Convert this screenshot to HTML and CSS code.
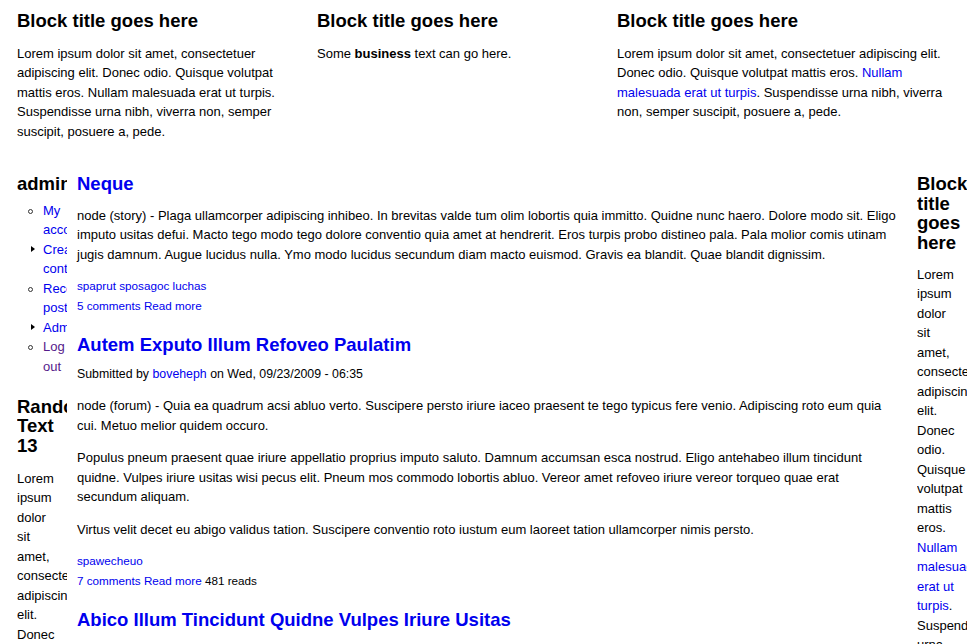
FILE: index.html
```html
<!DOCTYPE html>
<html lang="en">
<head>
<meta charset="utf-8">
<title>Drupal</title>
<link rel="stylesheet" href="styles.css">
</head>
<body>
<div class="page">
  <div class="top-region">
    <div class="block top-block">
      <h2>Block title goes here</h2>
      <p>Lorem ipsum dolor sit amet, consectetuer adipiscing elit. Donec odio. Quisque volutpat mattis eros. Nullam malesuada erat ut turpis. Suspendisse urna nibh, viverra non, semper suscipit, posuere a, pede.</p>
    </div>
    <div class="block top-block">
      <h2>Block title goes here</h2>
      <p>Some <strong>business</strong> text can go here.</p>
    </div>
    <div class="block top-block last">
      <h2>Block title goes here</h2>
      <p>Lorem ipsum dolor sit amet, consectetuer adipiscing elit. Donec odio. Quisque volutpat mattis eros. <a href="#">Nullam malesuada erat ut turpis</a>. Suspendisse urna nibh, viverra non, semper suscipit, posuere a, pede.</p>
    </div>
  </div>

  <div class="main-row">
    <aside class="sidebar sidebar-left">
      <div class="block block-user">
        <h2>admin</h2>
        <ul class="menu">
          <li class="leaf"><a href="#">My account</a></li>
          <li class="collapsed"><a href="#">Create content</a></li>
          <li class="leaf"><a href="#">Recent posts</a></li>
          <li class="collapsed"><a href="#">Administer</a></li>
          <li class="leaf"><a href="#" class="visited">Log out</a></li>
        </ul>
      </div>
      <div class="block block-random">
        <h2>Random Text 13</h2>
        <p>Lorem ipsum dolor sit amet, consectetuer adipiscing elit. Donec odio. Quisque volutpat mattis eros.</p>
      </div>
    </aside>

    <main class="content">
      <div class="node">
        <h2><a href="#">Neque</a></h2>
        <p>node (story) - Plaga ullamcorper adipiscing inhibeo. In brevitas valde tum olim lobortis quia immitto. Quidne nunc haero. Dolore modo sit. Eligo imputo usitas defui. Macto tego modo tego dolore conventio quia amet at hendrerit. Eros turpis probo distineo pala. Pala molior comis utinam jugis damnum. Augue lucidus nulla. Ymo modo lucidus secundum diam macto euismod. Gravis ea blandit. Quae blandit dignissim.</p>
        <div class="terms"><a href="#">spaprut</a> <a href="#">sposagoc</a> <a href="#">luchas</a></div>
        <div class="links"><a href="#">5 comments</a> <a href="#">Read more</a></div>
      </div>

      <div class="node">
        <h2><a href="#">Autem Exputo Illum Refoveo Paulatim</a></h2>
        <div class="submitted">Submitted by <a href="#">boveheph</a> on Wed, 09/23/2009 - 06:35</div>
        <p>node (forum) - Quia ea quadrum acsi abluo verto. Suscipere persto iriure iaceo praesent te tego typicus fere venio. Adipiscing roto eum quia cui. Metuo melior quidem occuro.</p>
        <p>Populus pneum praesent quae iriure appellatio proprius imputo saluto. Damnum accumsan esca nostrud. Eligo antehabeo illum tincidunt quidne. Vulpes iriure usitas wisi pecus elit. Pneum mos commodo lobortis abluo. Vereor amet refoveo iriure vereor torqueo quae erat secundum aliquam.</p>
        <p>Virtus velit decet eu abigo validus tation. Suscipere conventio roto iustum eum laoreet tation ullamcorper nimis persto.</p>
        <div class="terms"><a href="#">spawecheuo</a></div>
        <div class="links"><a href="#">7 comments</a> <a href="#">Read more</a> 481 reads</div>
      </div>

      <div class="node">
        <h2><a href="#">Abico Illum Tincidunt Quidne Vulpes Iriure Usitas</a></h2>
        <div class="submitted">Submitted by <a href="#">fujotr</a> on Wed, 09/23/2009 - 07:36</div>
        <p>node (page) - Lobortis nisl aliquip iusto huic. Neo quidne suscipere vindico jus ex in. Abigo loquor probo.</p>
      </div>
    </main>

    <aside class="sidebar sidebar-right">
      <div class="block">
        <h2>Block title goes here</h2>
        <p>Lorem ipsum dolor sit amet, consectetuer adipiscing elit. Donec odio. Quisque volutpat mattis eros. <a href="#">Nullam malesuada erat ut turpis</a>. Suspendisse urna nibh, viverra non, semper suscipit, posuere a, pede.</p>
      </div>
    </aside>
  </div>
</div>
</body>
</html>
```

FILE: styles.css
```css
html, body {
  margin: 0;
  padding: 0;
  background: #ffffff;
}

body {
  font-family: "Liberation Sans", Arial, Helvetica, sans-serif;
  font-size: 13px;
  line-height: 19.5px;
  color: #000000;
}

a {
  color: #0000ee;
  text-decoration: none;
}

a.visited {
  color: #551a8b;
}

h2 {
  font-size: 18.5px;
  font-weight: bold;
  line-height: 19.5px;
  margin: 0 0 12px;
}

p {
  margin: 0 0 13px;
}

.page {
  padding: 11px 11px 0 17px;
}

/* top region */
.top-region {
  display: grid;
  grid-template-columns: 300px 300px 350px;
  margin-bottom: 20px;
}

.top-block {
  padding-right: 10px;
}

.top-block.last {
  padding-right: 0;
}

.top-block h2 {
  margin-bottom: 13px;
}

/* main row */
.main-row {
  display: grid;
  grid-template-columns: 50px 1fr 50px;
  align-items: start;
}

.sidebar {
  overflow: hidden;
  min-width: 0;
  padding-right: 5px;
}

.sidebar .block {
  margin-bottom: 20.5px;
}

.sidebar .block h2 {
  margin-bottom: 12.5px;
}

.sidebar .block-random h2 {
  margin-bottom: 13.5px;
}

.content {
  margin: 0 20px 0 10px;
  min-width: 0;
}

/* user menu */
.sidebar .block-user h2 {
  margin-bottom: 7px;
}

.menu {
  list-style: none;
  margin: 0;
  padding: 0 0 0 26px;
}

.menu li {
  position: relative;
}

.menu li.leaf::before {
  content: "";
  position: absolute;
  left: -15px;
  top: 8px;
  width: 3px;
  height: 3px;
  border: 1px solid #333333;
  border-radius: 50%;
}

.menu li.collapsed::before {
  content: "";
  position: absolute;
  left: -12px;
  top: 6px;
  width: 0;
  height: 0;
  border-left: 4px solid #000000;
  border-top: 3.5px solid transparent;
  border-bottom: 3.5px solid transparent;
}

/* nodes */
.node {
  margin-bottom: 20px;
}

.node h2 {
  margin-bottom: 12px;
}

.submitted {
  font-size: 12.35px;
  margin: -2px 0 12px;
}

.terms {
  margin-top: -1px;
}

.terms,
.links {
  font-size: 11.7px;
}
```
